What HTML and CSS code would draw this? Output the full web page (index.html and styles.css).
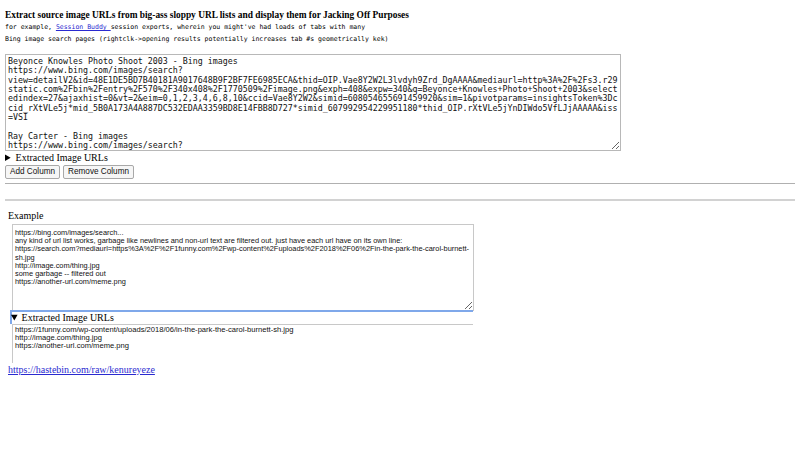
FILE: index.html
```html
<!DOCTYPE html>
<html>
<head>
<meta charset="utf-8">
<link rel="stylesheet" href="styles.css">
</head>
<body>
<h4 class="title">Extract source image URLs from big-ass sloppy URL lists and display them for Jacking Off Purposes</h4>
<div class="intro">for example, <a class="intro-link" href="#">Session Buddy </a>session exports, wherein you might've had loads of tabs with many<br>Bing image search pages (rightclk-&gt;opening results potentially increases tab #s geometrically kek)</div>
<textarea class="source" wrap="off" spellcheck="false">Beyonce Knowles Photo Shoot 2003 - Bing images
https://www.bing.com/images/search?
view=detailV2&amp;id=48E1DE5BD7B40181A9017648B9F2BF7FE6985ECA&amp;thid=OIP.Vae8Y2W2L3lvdyh9Zrd_DgAAAA&amp;mediaurl=http%3A%2F%2Fs3.r29
static.com%2Fbin%2Fentry%2F570%2F340x408%2F1770509%2Fimage.png&amp;exph=408&amp;expw=340&amp;q=Beyonce+Knowles+Photo+Shoot+2003&amp;select
edindex=27&amp;ajaxhist=0&amp;vt=2&amp;eim=0,1,2,3,4,6,8,10&amp;ccid=Vae8Y2W2&amp;simid=608054655691459920&amp;sim=1&amp;pivotparams=insightsToken%3Dc
cid_rXtVLe5j*mid_5B0A173A4A887DC532EDAA3359BD8E14FBB8D727*simid_607992954229951180*thid_OIP.rXtVLe5jYnDIWdo5VfLJjAAAAA&amp;iss
=VSI

Ray Carter - Bing images
https://www.bing.com/images/search?
view=detailV2&amp;id=6A1F0C2D4E8B7A9C3D5E1F2A4B6C8D0E1F2A3B4C&amp;thid=OIP.rXtVLe5jYnDIWdo5VfLJjAAAAA&amp;mediaurl=http%3A%2F%2Fwww.r
static.com%2Fimages%2Fray-carter.jpg&amp;exph=400&amp;expw=300&amp;q=Ray+Carter&amp;selectedindex=3&amp;ajaxhist=0&amp;vt=2</textarea>
<details class="extracted"><summary class="extracted-summary">Extracted Image URLs</summary></details>
<div class="buttons"><button class="btn">Add Column</button><button class="btn">Remove Column</button></div>
<hr class="rule-thin">
<hr class="rule-thick">
<div class="example">
<div class="example-label">Example</div>
<textarea class="example-input" wrap="off" spellcheck="false">https://bing.com/images/search...
any kind of url list works, garbage like newlines and non-url text are filtered out. just have each url have on its own line:
https://search.com?mediaurl=https%3A%2F%2F1funny.com%2Fwp-content%2Fuploads%2F2018%2F06%2Fin-the-park-the-carol-burnett-
sh.jpg
http://image.com/thing.jpg
some garbage -- filtered out
https://another-url.com/meme.png</textarea>
<details class="example-out" open><summary class="example-summary">Extracted Image URLs</summary><div class="out-box">https://1funny.com/wp-content/uploads/2018/06/in-the-park-the-carol-burnett-sh.jpg<br>http://image.com/thing.jpg<br>https://another-url.com/meme.png</div></details>
</div>
<a class="haste" href="#">https://hastebin.com/raw/kenureyeze</a>
</body>
</html>
```
FILE: styles.css
```css
html, body {
  background: #ffffff;
}
body {
  margin: 5px;
  font-family: "Liberation Serif", "Times New Roman", serif;
  font-size: 10px;
  color: #000;
}
.title {
  font-size: 9.4px;
  font-weight: bold;
  margin: 4px 0 0 0;
  line-height: 12px;
}
.intro {
  font-family: "DejaVu Sans Mono", monospace;
  font-size: 6.5px;
  line-height: 12px;
  margin-bottom: 9px;
}
.intro-link {
  color: #2a2ad0;
  text-decoration: underline;
}
.source {
  display: block;
  box-sizing: border-box;
  width: 616px;
  height: 97px;
  margin: 0;
  padding: 2px 2px;
  border: 1px solid #b8b8b8;
  font-family: "DejaVu Sans Mono", monospace;
  font-size: 8.3px;
  line-height: 9.35px;
  color: #111;
  overflow: hidden;
  resize: both;
  white-space: pre;
}
.extracted-summary, .example-summary {
  font-size: 10px;
  cursor: default;
}
.extracted-summary {
  line-height: 14px;
}
.buttons {
  display: flex;
  gap: 3px;
}
.btn {
  font-family: "Liberation Sans", Arial, sans-serif;
  font-size: 8.2px;
  line-height: 10px;
  padding: 1px 4px;
  margin: 0;
  background: #f6f6f6;
  border: 1px solid #a8a8a8;
  border-radius: 2px;
  color: #111;
}
.rule-thin {
  border: 0;
  border-top: 1px solid #b0b0b0;
  margin: 4px -2px 0 -2px;
}
.rule-thick {
  border: 0;
  border-top: 2px solid #d2d2d2;
  margin: 15px -2px 0 -2px;
}
.example {
  padding: 8px 3px 0 3px;
}
.example-label {
  font-size: 10px;
  line-height: 14px;
}
.example-input {
  display: block;
  box-sizing: border-box;
  width: 462px;
  height: 87px;
  margin: 1px 0 0 4px;
  padding: 4px 2px 2px 2px;
  border: 1px solid #c8c8c8;
  font-family: "Liberation Sans", Arial, sans-serif;
  font-size: 7.4px;
  line-height: 8.2px;
  color: #111;
  overflow: hidden;
  resize: both;
  white-space: pre;
}
.example-out {
  margin-left: 2px;
  width: 463px;
}
.example-summary {
  line-height: 13px;
  margin-top: -1px;
  padding: 1px 0 0 1px;
  outline: none;
  box-shadow: inset 2px 2px 0 #7fa8ea;
  position: relative;
}
.out-box {
  margin-left: 2px;
  border-top: 1px solid #c8c8c8;
  border-left: 1px solid #c8c8c8;
  height: 37px;
  padding: 1px 2px 0 2px;
  font-family: "Liberation Sans", Arial, sans-serif;
  font-size: 7.6px;
  line-height: 8.2px;
  color: #111;
}
.haste {
  display: inline-block;
  margin-left: 3px;
  font-size: 10px;
  line-height: 13px;
  color: #2a2ad0;
}
```
